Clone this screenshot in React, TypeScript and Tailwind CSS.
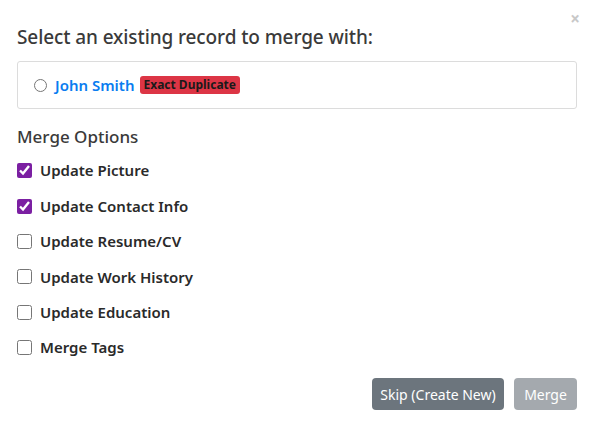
import React, { useState } from 'react';

const options = [
  { id: 'picture', label: 'Update Picture', checked: true },
  { id: 'contact', label: 'Update Contact Info', checked: true },
  { id: 'resume', label: 'Update Resume/CV', checked: false },
  { id: 'work', label: 'Update Work History', checked: false },
  { id: 'education', label: 'Update Education', checked: false },
  { id: 'tags', label: 'Merge Tags', checked: false },
];

const App: React.FC = () => {
  const [checked, setChecked] = useState<Record<string, boolean>>(
    Object.fromEntries(options.map(o => [o.id, o.checked]))
  );

  return (
    <div className="w-[594px] h-[426px] bg-white text-[#212529] font-['Noto_Sans',sans-serif] relative">
      <button className="absolute right-[14px] top-[10px] text-[#c8c8c8] text-[17px] leading-none font-bold">×</button>
      <div className="px-[17px] pt-[24px]">
        <h2 className="text-[19px] leading-[26px] font-medium text-[#3a3a3a] tracking-[-0.1px]">Select an existing record to merge with:</h2>
        <div className="mt-[11px] border border-[#dcdcdc] rounded-[3px] h-[48px] flex items-center px-[16px]">
          <input type="radio" name="record" className="w-[13px] h-[13px] mr-[8px] mt-[1px]" />
          <span className="text-[#0a7cf0] text-[15px] font-semibold">John Smith</span>
          <span className="ml-[5px] bg-[#dc3545] text-[#1a1a1a] text-[12px] font-bold px-[4px] rounded-[3px] leading-[18px]">Exact Duplicate</span>
        </div>
        <h3 className="mt-[16px] text-[17px] leading-[24px] font-medium text-[#3a3a3a]">Merge Options</h3>
        <div className="mt-[4px] flex flex-col">
          {options.map(o => (
            <label key={o.id} className="flex items-center h-[35.4px] gap-[8px] cursor-pointer">
              <input
                type="checkbox"
                checked={checked[o.id]}
                onChange={e => setChecked({ ...checked, [o.id]: e.target.checked })}
                className="w-[15px] h-[15px] accent-[#7b1fa2]"
              />
              <span className="text-[15px] font-semibold text-[#2a2a2a]">{o.label}</span>
            </label>
          ))}
        </div>
        <div className="mt-[13px] flex justify-end gap-[10px]">
          <button className="bg-[#6c757d] text-white text-[14px] rounded-[4px] h-[32px] w-[132px]">Skip (Create New)</button>
          <button disabled className="bg-[#a4a9ae] text-white text-[14px] rounded-[4px] h-[32px] w-[63px]">Merge</button>
        </div>
      </div>
    </div>
  );
};

export default App;
